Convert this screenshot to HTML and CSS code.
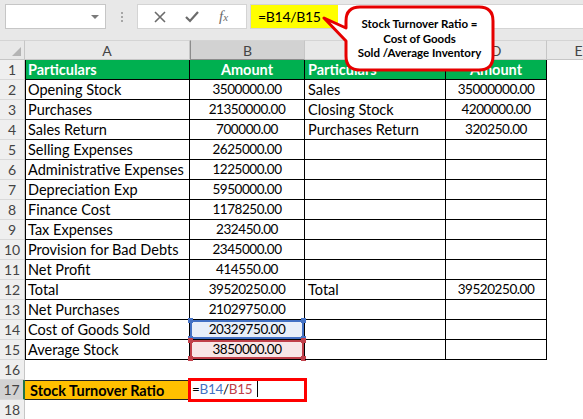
FILE: index.html
```html
<!DOCTYPE html>
<html lang="en">
<head>
    <meta charset="UTF-8">
    <title>Stock Turnover Ratio</title>
    <link rel="stylesheet" href="styles.css">
</head>
<body>
    <!-- Formula bar -->
    <div class="toolbar">
        <div class="name-box"><span class="drop-arrow"></span></div>
        <div class="grip"><i></i><i></i><i></i></div>
        <div class="fx-buttons">
            <svg class="icon" width="12" height="12" viewBox="0 0 12 12"><path d="M1 1 L11 11 M11 1 L1 11" stroke="#6b6b6b" stroke-width="1.6" fill="none"/></svg>
            <svg class="icon" width="14" height="12" viewBox="0 0 14 12"><path d="M1 6 L5 10 L13 1" stroke="#6b6b6b" stroke-width="2.2" fill="none"/></svg>
            <span class="fx">f<sub>x</sub></span>
        </div>
        <div class="formula-input">
            <span class="formula-text">=B14/B15</span>
        </div>
    </div>

    <div class="callout">
        <svg width="175" height="72" viewBox="0 0 175 72">
            <path d="M38 3 H157 Q171 3 171 17 V52 Q171 66 157 66 H38 Q24 66 24 52 V37 L2 14 L24 24 V17 Q24 3 38 3 Z" fill="#fff" stroke="#e60000" stroke-width="3" stroke-linejoin="round"/>
        </svg>
        <div class="callout-text">Stock Turnover Ratio =<br>Cost of Goods<br>Sold /Average Inventory</div>
    </div>

    <!-- Sheet -->
    <div class="sheet">
        <div class="corner"><span class="corner-tri"></span></div>
        <div class="col-head">A</div>
        <div class="col-head active">B</div>
        <div class="col-head">C</div>
        <div class="col-head">D</div>
        <div class="col-head">E</div>

        <div class="rh">1</div>
        <div class="c t ta head">Particulars</div>
        <div class="c t head num">Amount</div>
        <div class="c t head">Particulars</div>
        <div class="c t head num">Amount</div>
        <div class="c"></div>

        <div class="rh">2</div>
        <div class="c t ta">Opening Stock</div>
        <div class="c t num">3500000.00</div>
        <div class="c t">Sales</div>
        <div class="c t num">35000000.00</div>
        <div class="c"></div>

        <div class="rh">3</div>
        <div class="c t ta">Purchases</div>
        <div class="c t num">21350000.00</div>
        <div class="c t">Closing Stock</div>
        <div class="c t num">4200000.00</div>
        <div class="c"></div>

        <div class="rh">4</div>
        <div class="c t ta">Sales Return</div>
        <div class="c t num">700000.00</div>
        <div class="c t">Purchases Return</div>
        <div class="c t num">320250.00</div>
        <div class="c"></div>

        <div class="rh">5</div>
        <div class="c t ta">Selling Expenses</div>
        <div class="c t num">2625000.00</div>
        <div class="c t"></div>
        <div class="c t"></div>
        <div class="c"></div>

        <div class="rh">6</div>
        <div class="c t ta">Administrative Expenses</div>
        <div class="c t num">1225000.00</div>
        <div class="c t"></div>
        <div class="c t"></div>
        <div class="c"></div>

        <div class="rh">7</div>
        <div class="c t ta">Depreciation Exp</div>
        <div class="c t num">5950000.00</div>
        <div class="c t"></div>
        <div class="c t"></div>
        <div class="c"></div>

        <div class="rh">8</div>
        <div class="c t ta">Finance Cost</div>
        <div class="c t num">1178250.00</div>
        <div class="c t"></div>
        <div class="c t"></div>
        <div class="c"></div>

        <div class="rh">9</div>
        <div class="c t ta">Tax Expenses</div>
        <div class="c t num">232450.00</div>
        <div class="c t"></div>
        <div class="c t"></div>
        <div class="c"></div>

        <div class="rh">10</div>
        <div class="c t ta">Provision for Bad Debts</div>
        <div class="c t num">2345000.00</div>
        <div class="c t"></div>
        <div class="c t"></div>
        <div class="c"></div>

        <div class="rh">11</div>
        <div class="c t ta">Net Profit</div>
        <div class="c t num">414550.00</div>
        <div class="c t"></div>
        <div class="c t"></div>
        <div class="c"></div>

        <div class="rh">12</div>
        <div class="c t ta">Total</div>
        <div class="c t num">39520250.00</div>
        <div class="c t">Total</div>
        <div class="c t num">39520250.00</div>
        <div class="c"></div>

        <div class="rh">13</div>
        <div class="c t ta">Net Purchases</div>
        <div class="c t num">21029750.00</div>
        <div class="c t"></div>
        <div class="c t"></div>
        <div class="c"></div>

        <div class="rh">14</div>
        <div class="c t ta">Cost of Goods Sold</div>
        <div class="c t num ref-blue">20329750.00<span class="h h1"></span><span class="h h2"></span><span class="h h3"></span><span class="h h4"></span></div>
        <div class="c t"></div>
        <div class="c t"></div>
        <div class="c"></div>

        <div class="rh">15</div>
        <div class="c t ta">Average Stock</div>
        <div class="c t num ref-red">3850000.00<span class="h h1"></span><span class="h h2"></span><span class="h h3"></span><span class="h h4"></span></div>
        <div class="c t"></div>
        <div class="c t"></div>
        <div class="c"></div>

        <div class="rh">16</div>
        <div class="c"></div>
        <div class="c"></div>
        <div class="c"></div>
        <div class="c"></div>
        <div class="c"></div>

        <div class="rh active">17</div>
        <div class="c ratio">Stock Turnover Ratio</div>
        <div class="c editing">=<span class="blue">B14</span>/<span class="red">B15</span><span class="caret"></span></div>
        <div class="c"></div>
        <div class="c"></div>
        <div class="c"></div>

        <div class="rh">18</div>
        <div class="c"></div>
        <div class="c"></div>
        <div class="c"></div>
        <div class="c"></div>
        <div class="c"></div>
    </div>
</body>
</html>
```

FILE: styles.css
```css
/* General Reset */
body, html {
    margin: 0;
    padding: 0;
    background-color: #ffffff;
    font-family: Lato, "Liberation Sans", sans-serif;
    color: #000;
}

body {
    width: 583px;
    height: 419px;
    overflow: hidden;
    position: relative;
}

/* Formula bar */
.toolbar {
    height: 40px;
    background-color: #e8e8e8;
    display: flex;
    align-items: flex-start;
    padding: 4px 0 0 5px;
    box-sizing: border-box;
}

.name-box {
    width: 101px;
    height: 25px;
    box-sizing: border-box;
    background: #fff;
    border: 1px solid #c6c6c6;
    position: relative;
}

.drop-arrow {
    position: absolute;
    right: 6px;
    top: 10px;
    border-left: 4px solid transparent;
    border-right: 4px solid transparent;
    border-top: 4px solid #7a7a7a;
}

.grip {
    width: 31px;
    height: 25px;
    display: flex;
    flex-direction: column;
    align-items: center;
    justify-content: center;
    gap: 2px;
}

.grip i {
    width: 2px;
    height: 2px;
    background: #a6a6a6;
}

.fx-buttons {
    width: 110px;
    height: 25px;
    box-sizing: border-box;
    background: #fff;
    border: 1px solid #d4d4d4;
    display: flex;
    align-items: center;
    justify-content: space-around;
    padding: 0 8px 0 6px;
}

.fx {
    font-family: "Liberation Serif", serif;
    font-style: italic;
    font-size: 15px;
    color: #6b6b6b;
}

.fx sub {
    font-size: 11px;
    vertical-align: 0;
}

.formula-input {
    flex: 1;
    height: 25px;
    margin-left: 3px;
    box-sizing: border-box;
    background: #fff;
    border: 1px solid #d4d4d4;
    border-right: none;
}

.formula-text {
    display: inline-block;
    height: 23px;
    line-height: 23px;
    width: 87px;
    padding-left: 7px;
    box-sizing: border-box;
    background: #ffff00;
    font-size: 14px;
    letter-spacing: -0.3px;
}

/* Callout bubble */
.callout {
    position: absolute;
    left: 322px;
    top: 4px;
    width: 175px;
    height: 72px;
    z-index: 10;
}

.callout svg {
    position: absolute;
    left: 0;
    top: 0;
}

.callout-text {
    position: absolute;
    left: 24px;
    top: 13px;
    width: 147px;
    text-align: center;
    font-size: 11.5px;
    font-weight: bold;
    line-height: 14.5px;
}

/* Sheet grid */
.sheet {
    display: grid;
    grid-template-columns: 25px 165px 115px 141px 101px 64px;
    grid-auto-rows: 20px;
}

.corner,
.col-head,
.rh {
    background: #e8e8e8;
    box-sizing: border-box;
    color: #444;
    font-size: 14px;
    text-align: center;
    line-height: 19px;
}

.corner {
    border-right: 1px solid #c6c6c6;
    border-bottom: 1px solid #c6c6c6;
    border-top: 1px solid #d4d4d4;
    position: relative;
}

.corner-tri {
    position: absolute;
    right: 3px;
    bottom: 3px;
    border-left: 9px solid transparent;
    border-bottom: 9px solid #b4b4b4;
}

.col-head {
    border-top: 1px solid #d4d4d4;
    border-right: 1px solid #c6c6c6;
    border-bottom: 1px solid #c6c6c6;
}

.col-head.active {
    background: #d2d2d2;
    border-left: 1px solid #8c8c8c;
    border-bottom: 1px solid #8c8c8c;
}

.rh {
    background: #efefef;
    border-right: 1px solid #c6c6c6;
    border-bottom: 1px solid #d9d9d9;
}

.rh.active {
    background: #d2d2d2;
    border-right: 2px solid #217346;
    color: #444;
}

.c {
    box-sizing: border-box;
    font-size: 14.5px;
    line-height: 19px;
    padding-left: 3px;
    white-space: nowrap;
    position: relative;
}

/* Bordered table region */
.t {
    border-right: 1px solid #000;
    border-bottom: 1px solid #000;
}

.ta {
    border-left: 1px solid #000;
    padding-left: 2px;
}

.num {
    text-align: center;
    padding-left: 0;
    font-size: 13.5px;
    letter-spacing: -0.45px;
}

.head {
    background: #00b050;
    color: #fff;
    font-weight: bold;
}

.head.num {
    font-size: 14.5px;
    letter-spacing: 0;
}

/* Referenced cells */
.ref-blue {
    background: #e8eff9;
    box-shadow: inset 0 0 0 2px #4472c4;
}

.ref-red {
    background: #f8e6e7;
    box-shadow: inset 0 0 0 2px #c0404a;
}

.h {
    position: absolute;
    width: 5px;
    height: 5px;
}

.ref-blue .h { background: #4472c4; }
.ref-red .h { background: #c0404a; }

.h1 { left: -2px; top: -2px; }
.h2 { right: -2px; top: -2px; }
.h3 { left: -2px; bottom: -2px; }
.h4 { right: -2px; bottom: -2px; }

.ratio {
    background: #ffc000;
    font-weight: bold;
    border-top: 1px solid #222;
    border-bottom: 1px solid #222;
    padding-left: 5px;
}

.editing {
    outline: 3px solid #ff0000;
    outline-offset: -1px;
    padding-left: 2px;
    z-index: 2;
    font-size: 13.5px;
    letter-spacing: -0.3px;
}

.blue { color: #4472c4; }
.red { color: #c0404a; }

.caret {
    display: inline-block;
    width: 1px;
    height: 16px;
    background: #000;
    margin-left: 5px;
    vertical-align: -3px;
}
```
